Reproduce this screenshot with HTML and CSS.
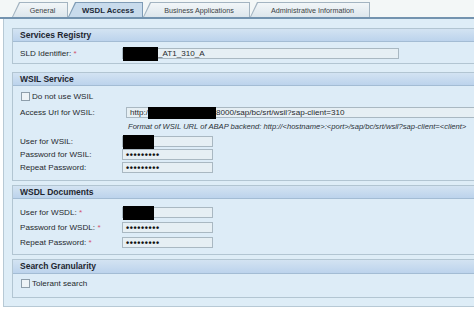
FILE: index.html
```html
<!DOCTYPE html>
<html>
<head>
    <title>WSDL Access</title>
    <meta charset="UTF-8">
    <link rel="stylesheet" href="styles.css">
</head>
<body>
<div class="tabs">
    <div class="tab tab--general"><span class="tab__in">General</span></div>
    <div class="tab tab--wsdl is-active"><span class="tab__in">WSDL Access</span></div>
    <div class="tab tab--apps"><span class="tab__in">Business Applications</span></div>
    <div class="tab tab--admin"><span class="tab__in">Administrative Information</span></div>
</div>
<div class="panel">
    <div class="group group--sld">
        <div class="group__head">Services Registry</div>
        <div class="group__body">
            <div class="row">
                <div class="row__label">SLD Identifier: <span class="req">*</span></div>
                <div class="field field--sld"><span class="mask mask--sld"></span>_AT1_310_A</div>
            </div>
        </div>
    </div>
    <div class="group group--wsil">
        <div class="group__head">WSIL Service</div>
        <div class="group__body">
            <div class="row row--check"><span class="check"></span>Do not use WSIL</div>
            <div class="row row--url">
                <div class="row__label">Access Url for WSIL:</div>
                <div class="field field--url">http:/<span class="mask mask--url"></span>8000/sap/bc/srt/wsil?sap-client=310</div>
            </div>
            <div class="row row--hint">
                <div class="row__label"></div>
                <div class="hint">Format of WSIL URL of ABAP backend: http://&lt;hostname&gt;:&lt;port&gt;/sap/bc/srt/wsil?sap-client=&lt;client&gt;</div>
            </div>
            <div class="row row--user">
                <div class="row__label">User for WSIL:</div>
                <div class="field field--short"><span class="mask mask--user"></span></div>
            </div>
            <div class="row row--pw">
                <div class="row__label">Password for WSIL:</div>
                <div class="field field--short"><span class="dots">&bull;&bull;&bull;&bull;&bull;&bull;&bull;&bull;&bull;</span></div>
            </div>
            <div class="row row--pw">
                <div class="row__label">Repeat Password:</div>
                <div class="field field--short"><span class="dots">&bull;&bull;&bull;&bull;&bull;&bull;&bull;&bull;&bull;</span></div>
            </div>
        </div>
    </div>
    <div class="group group--wsdl">
        <div class="group__head">WSDL Documents</div>
        <div class="group__body">
            <div class="row">
                <div class="row__label">User for WSDL: <span class="req">*</span></div>
                <div class="field field--short"><span class="mask mask--user"></span></div>
            </div>
            <div class="row row--pw2">
                <div class="row__label">Password for WSDL: <span class="req">*</span></div>
                <div class="field field--short"><span class="dots">&bull;&bull;&bull;&bull;&bull;&bull;&bull;&bull;&bull;</span></div>
            </div>
            <div class="row row--pw2">
                <div class="row__label">Repeat Password: <span class="req">*</span></div>
                <div class="field field--short"><span class="dots">&bull;&bull;&bull;&bull;&bull;&bull;&bull;&bull;&bull;</span></div>
            </div>
        </div>
    </div>
    <div class="group group--search">
        <div class="group__head">Search Granularity</div>
        <div class="group__body">
            <div class="row row--check"><span class="check"></span>Tolerant search</div>
        </div>
    </div>
</div>
</body>
</html>
```

FILE: styles.css
```css
body {
    margin: 0;
    background-color: #fff;
    color: #262a2e;
    font-family: "Liberation Sans", Arial, sans-serif;
    font-size: 8.1px;
    overflow: hidden;
}

/* tab strip */
.tabs {
    display: flex;
    align-items: flex-end;
    height: 17px;
    padding-left: 12px;
    background: #f3f7f7;
    border-bottom: 2px solid #7393af;
}

.tab {
    height: 15px;
    background: #a3b4c1;
    clip-path: polygon(7px 0, 100% 0, 100% 100%, 0 100%);
    font-size: 7.2px;
}

.tab__in {
    display: flex;
    align-items: center;
    justify-content: center;
    height: 14px;
    margin: 1px 1px 0 1px;
    padding-left: 5px;
    background: linear-gradient(#f2f6f8, #dde6ec);
    clip-path: polygon(7px 0, 100% 0, 100% 100%, 0 100%);
    color: #3a3f44;
}

.tab.is-active {
    background: #7f9cb6;
}

.tab.is-active .tab__in {
    background: #c8dbec;
    font-weight: bold;
    font-size: 7.8px;
    color: #1c2a38;
}

.tab--general { width: 56px; }
.tab--wsdl { width: 75px; }
.tab--apps { width: 107px; }
.tab--admin { width: 120px; }

/* panel */
.panel {
    margin-left: 3px;
    height: 288px;
    box-sizing: border-box;
    padding: 9px 0 0 8px;
    background: #deedf7;
    border-left: 1px solid #b7c9d5;
    border-bottom: 1px solid #b7c9d5;
}

.group {
    border: 1px solid #b2c5d2;
    border-right: none;
    background: #ddecf7;
}

.group--sld { margin-bottom: 8px; }
.group--wsil { margin-bottom: 4px; }
.group--wsdl { margin-bottom: 4px; }

.group__head {
    height: 12px;
    line-height: 12px;
    padding-left: 7px;
    background: linear-gradient(#d3e3f2, #bcd3ec);
    border-bottom: 1px solid #a3bcd4;
    font-weight: bold;
    font-size: 8.5px;
    color: #1e2630;
}

.group--search .group__head {
    height: 13px;
    line-height: 13px;
}

.group__body {
    padding: 6px 0 4px 7px;
}

.group--wsil .group__body { padding: 5px 0 7px 7px; }
.group--wsdl .group__body { padding: 8px 0 6px 7px; }
.group--search .group__body { padding: 4px 0 8px 7px; }

.row {
    display: flex;
    align-items: center;
    height: 11px;
}

.row__label {
    width: 102px;
    flex-shrink: 0;
}

.row--url { margin-top: 5px; }
.row--url .row__label { width: 106px; }
.row--hint { margin-top: 3px; height: 10px; }
.row--hint .row__label { width: 108px; }
.row--user { margin-top: 5px; }
.row--pw { margin-top: 2px; }
.row--pw2 { margin-top: 4px; }

.req {
    color: #d2506c;
}

.field {
    height: 11px;
    box-sizing: border-box;
    display: flex;
    align-items: center;
    padding-left: 2px;
    background: #e6eff4;
    border: 1px solid #a9b8c2;
    white-space: nowrap;
    overflow: visible;
}

.field--sld { width: 277px; padding-left: 0; }
.field--url { flex: 1; border-right: none; padding-left: 3px; }
.field--short { width: 91px; padding-left: 0; }

.mask {
    display: inline-block;
    background: #000;
    flex-shrink: 0;
}

.mask--sld { width: 35px; height: 14px; }
.mask--url { width: 68px; height: 12px; }
.mask--user { width: 31px; height: 14px; }

.dots {
    padding-left: 3px;
    font-size: 9px;
    font-weight: bold;
    letter-spacing: 0.6px;
    color: #111;
}

.hint {
    font-style: italic;
    font-size: 7.6px;
    white-space: nowrap;
    color: #2c3238;
}

.row--check {
    padding-left: 1px;
}

.check {
    width: 9px;
    height: 9px;
    box-sizing: border-box;
    margin-right: 2px;
    background: #edf3f7;
    border: 1px solid #8e9eab;
}
```
